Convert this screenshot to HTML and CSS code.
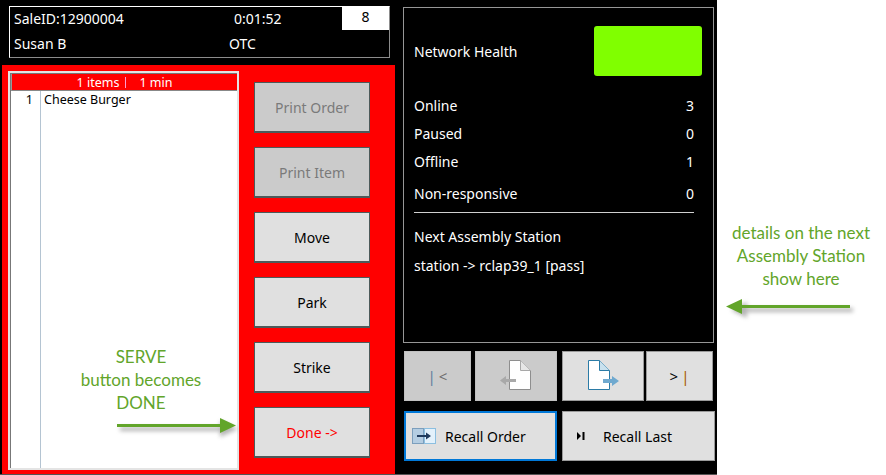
FILE: index.html
```html
<!DOCTYPE html>
<html lang="en">
<head>
<meta charset="utf-8">
<title>Expediter</title>
<link rel="stylesheet" href="styles.css">
</head>
<body>
<div class="page">
  <main class="app">
    <section class="left">
      <header class="sale">
        <div class="sale-row sale-top">
          <span class="sale-id">SaleID:12900004</span>
          <span class="sale-time">0:01:52</span>
          <span class="sale-count">8</span>
        </div>
        <div class="sale-row sale-bottom">
          <span class="sale-id">Susan B</span>
          <span class="sale-type">OTC</span>
        </div>
      </header>
      <div class="order">
        <div class="list">
          <div class="list-head"><span class="head-items">1 items</span><span class="head-bar"></span><span class="head-min">1 min</span></div>
          <div class="list-body">
            <div class="qty">1</div>
            <div class="item">Cheese Burger</div>
          </div>
        </div>
        <div class="actions">
          <button class="btn disabled">Print Order</button>
          <button class="btn disabled">Print Item</button>
          <button class="btn">Move</button>
          <button class="btn">Park</button>
          <button class="btn">Strike</button>
          <button class="btn done">Done -&gt;</button>
        </div>
      </div>
    </section>
    <section class="right">
      <div class="status">
        <div class="health"><span>Network Health</span><span class="health-light"></span></div>
        <div class="stat stat-first"><span>Online</span><span>3</span></div>
        <div class="stat"><span>Paused</span><span>0</span></div>
        <div class="stat"><span>Offline</span><span>1</span></div>
        <div class="stat stat-last"><span>Non-responsive</span><span>0</span></div>
        <div class="next">
          <div class="next-title">Next Assembly Station</div>
          <div class="next-line">station -&gt; rclap39_1 [pass]</div>
        </div>
      </div>
      <div class="nav">
        <button class="nav-btn nav-end disabled-nav"><span class="bar-left">|</span>&lt;</button>
        <button class="nav-btn nav-page disabled-nav">
          <svg width="34" height="34" viewBox="0 0 34 34"><path d="M10.500 1.500H21.500L31.500 11.500V30.500H10.500Z" fill="#fff" stroke="#8e8e8e"/><path d="M21.500 1.500V11.500H31.500" fill="#e6e6e6" stroke="#a8a8a8"/><path d="M1 21.500L7 17V20H17V23H7V26Z" fill="#a9a9a9"/></svg>
        </button>
        <button class="nav-btn nav-page">
          <svg width="34" height="34" viewBox="0 0 34 34"><path d="M2.500 1.500H13.500L23.500 11.500V30.500H2.500Z" fill="#fff" stroke="#2b7ba6"/><path d="M13.500 1.500V11.500H23.500" fill="#c9e1ee" stroke="#2b7ba6"/><path d="M17 20H26V17L33 22L26 27V24H17Z" fill="#6fa9cf"/></svg>
        </button>
        <button class="nav-btn nav-end">&gt;<span class="bar-right">|</span></button>
      </div>
      <div class="recall">
        <button class="recall-btn recall-active">
          <svg class="recall-icon" width="24" height="16" viewBox="0 0 24 16"><rect x="0.500" y="0.500" width="11" height="15" fill="#b4cde2" stroke="#7c9fbd"/><rect x="12.500" y="0.500" width="11" height="15" fill="#e3f1fb" stroke="#8cbfe0"/><path d="M5 7H14V4.500L19 8L14 11.500V9H5Z" fill="#1f3a5c"/></svg>
          <span>Recall Order</span>
        </button>
        <button class="recall-btn">
          <svg class="last-icon" width="8" height="8" viewBox="0 0 8 8"><path d="M0 0L4 4L0 8Z" fill="#000"/><rect x="5.500" y="0" width="2" height="8" fill="#000"/></svg>
          <span>Recall Last</span>
        </button>
      </div>
    </section>
  </main>
  <aside class="side-note">
    <p class="note">details on the next<br>Assembly Station<br>show here</p>
  </aside>
  <p class="note note-serve">SERVE<br>button becomes<br>DONE</p>
  <svg class="arrow arrow-serve" width="130" height="30" viewBox="0 0 130 30"><g class="arrow-shadow"><path d="M6 11H106V5L124 13L106 21V15H6Z"/></g><path d="M3 8H106V2L122 9.500L106 17V11H3Z" fill="#62a52a"/></svg>
  <svg class="arrow arrow-next" width="136" height="30" viewBox="0 0 136 30"><g class="arrow-shadow"><path d="M128 11H22V5L6 13L22 21V15H128Z"/></g><path d="M125 8H17V2L1 9.500L17 17V11H125Z" fill="#62a52a"/></svg>
</div>
</body>
</html>
```
FILE: styles.css
```css
* { box-sizing: border-box; }
html, body { margin: 0; padding: 0; background: #fff; }
body { width: 886px; height: 475px; overflow: hidden; font-family: "Noto Sans", "Liberation Sans", sans-serif; font-size: 14px; }
.page { position: relative; display: flex; width: 886px; height: 475px; }
button { font-family: inherit; font-size: 14px; padding: 0; margin: 0; cursor: default; }

.app { display: flex; width: 717px; height: 475px; background: #000; color: #fff; border-bottom: 1px solid #555; }
.left { width: 403px; display: flex; flex-direction: column; }
.sale { margin: 6px 0 0 9px; width: 381px; height: 52px; border: 1px solid #fff; border-right-color: #8c8c8c; border-bottom-color: #8c8c8c; }
.sale-row { display: flex; align-items: center; }
.sale-top { height: 23px; }
.sale-bottom { height: 27px; padding-bottom: 1px; }
.sale-id { width: 219px; padding-left: 4px; }
.sale-time { width: 113px; padding-left: 5px; }
.sale-count { width: 47px; height: 23px; background: #fff; color: #000; text-align: center; }
.sale-type { }

.order { display: flex; margin: 7px 0 0 2px; width: 393px; height: 409px; background: #f00; padding: 6px 0 0 6px; }
.list { width: 231px; height: 399px; background: #fff; border: 1px solid #e4e4e4; border-width: 2px; outline: 0; display: flex; flex-direction: column; box-shadow: inset 1px 1px 0 #777; }
.list-head { height: 17px; margin: 1px 0 0 1px; background: #f00; color: #fff; display: flex; justify-content: center; align-items: center; font-size: 12.500px; border-bottom: 1px solid #888; border-left: 1px solid #999; }
.head-bar { width: 1px; height: 11px; background: #ff9ad0; margin: 0 13px 0 6px; }
.list-body { flex: 1; display: flex; color: #000; font-size: 12.500px; }
.qty { width: 31px; padding: 0 7px 0 0; text-align: right; border-right: 1px solid #b4c4d2; line-height: 17px; }
.item { padding-left: 3px; line-height: 17px; }

.actions { display: flex; flex-direction: column; gap: 14px; margin: 11px 0 0 15px; }
.btn { width: 116px; height: 51px; background: #e0e0e0; border: 1px solid #4d5a5a; color: #000; border-width: 1px 1px 2px 1px; }
.btn.disabled { background: #cbcbcb; color: #7a7a7a; }
.btn.done { color: #f00; }

.right { width: 314px; display: flex; flex-direction: column; }
.status { margin-top: 7px; width: 311px; height: 336px; border: 1px solid #969696; padding: 0 19px 0 10px; }
.health { display: flex; justify-content: space-between; align-items: center; height: 50px; margin-top: 18px; margin-right: -8px; }
.health-light { width: 108px; height: 50px; background: #80ff00; border-radius: 3px; }
.stat { display: flex; justify-content: space-between; height: 28px; align-items: center; }
.stat-first { margin-top: 15px; }
.stat-last { margin-top: 4px; }
.next { border-top: 1px solid #d0d0d0; margin-top: 5px; padding-top: 12px; }
.next-title { height: 27px; line-height: 24px; }
.next-line { line-height: 27px; }

.nav { display: flex; margin: 8px 0 0 1px; height: 50px; }
.nav-btn { height: 50px; background: #e0e0e0; border: 1px solid #9a9a9a; color: #000; display: flex; align-items: center; justify-content: center; font-size: 15px; }
.nav-end { width: 67px; }
.nav-page { width: 82px; margin: 0 4px; }
.nav-btn:nth-child(3) { margin: 0 2px 0 5px; }
.nav-btn:nth-child(2) { margin: 0 0 0 4px; }
.nav-btn svg { display: block; }
.disabled-nav { background: #cbcbcb; color: #6e6e6e; border-color: #c0c0c0; }
.bar-left { color: #5f7f9f; margin-right: 3px; }
.bar-right { color: #a85a00; margin-left: 3px; }

.recall { display: flex; gap: 5px; margin: 10px 0 0 1px; height: 50px; }
.recall-btn { width: 153px; height: 50px; background: #e0e0e0; border: 1px solid #9a9a9a; color: #000; display: flex; align-items: center; padding-left: 14px; }
.recall-active { border: 2px solid #0078d7; padding-left: 6px; }
.recall-icon { margin-right: 9px; }
.last-icon { margin-right: 18px; }

.side-note { flex: 1; padding-top: 221px; }
.note { margin: 0; font-family: Lato, "Open Sans", sans-serif; font-size: 17px; line-height: 23px; color: #62a52a; text-align: center; }
.side-note .note { padding-left: 1px; width: 167px; }
.note-serve { position: absolute; left: 61px; top: 345px; width: 160px; }
.arrow { position: absolute; overflow: visible; }
.arrow-serve { left: 114px; top: 416px; }
.arrow-next { left: 725px; top: 297px; }
.arrow-shadow { fill: #777; opacity: .55; filter: blur(2px); }
```
